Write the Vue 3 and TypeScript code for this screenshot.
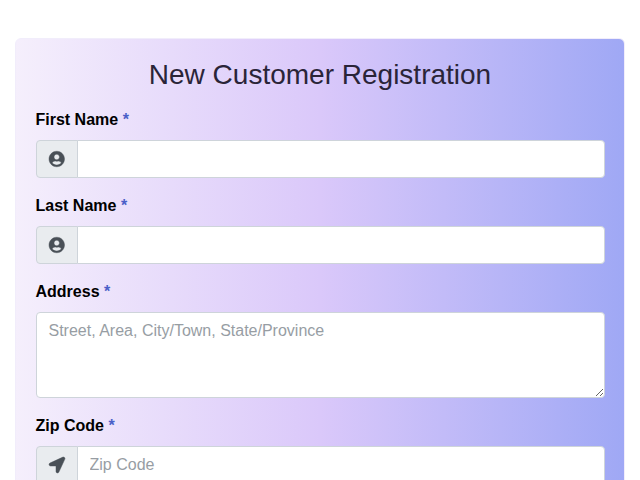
<script setup lang="ts">
const userPath =
  'M248 8C111 8 0 119 0 256s111 248 248 248 248-111 248-248S385 8 248 8zm0 96c48.6 0 88 39.4 88 88s-39.4 88-88 88-88-39.4-88-88 39.4-88 88-88zm0 344c-58.7 0-111.3-26.6-146.5-68.2 18.8-35.4 55.6-59.8 98.5-59.8 2.4 0 4.8.4 7.1 1.1 13 4.2 26.6 6.9 40.9 6.9 14.3 0 28-2.7 40.9-6.9 2.3-.7 4.7-1.1 7.1-1.1 42.9 0 79.7 24.4 98.5 59.8C359.3 421.4 306.7 448 248 448z'
const arrowPath =
  'M444.52 3.52L28.74 195.42c-47.97 22.39-31.98 92.75 19.19 92.75h175.91v175.91c0 51.17 70.36 67.17 92.75 19.19l191.9-415.78c15.99-38.39-25.59-79.97-63.97-63.97z'
</script>

<template>
  <div class="page">
    <form class="card" @submit.prevent>
      <h2 class="title">New Customer Registration</h2>

      <div class="field">
        <label class="label" for="first">First Name <span class="req">*</span></label>
        <div class="group">
          <span class="addon">
            <svg class="icon icon-user" viewBox="0 0 496 512"><path :d="userPath" /></svg>
          </span>
          <input id="first" class="control" type="text" />
        </div>
      </div>

      <div class="field">
        <label class="label" for="last">Last Name <span class="req">*</span></label>
        <div class="group">
          <span class="addon">
            <svg class="icon icon-user" viewBox="0 0 496 512"><path :d="userPath" /></svg>
          </span>
          <input id="last" class="control" type="text" />
        </div>
      </div>

      <div class="field">
        <label class="label" for="address">Address <span class="req">*</span></label>
        <textarea
          id="address"
          class="area"
          rows="3"
          placeholder="Street, Area, City/Town, State/Province"
        ></textarea>
      </div>

      <div class="field">
        <label class="label" for="zip">Zip Code <span class="req">*</span></label>
        <div class="group">
          <span class="addon">
            <svg class="icon" viewBox="0 0 512 512"><path :d="arrowPath" /></svg>
          </span>
          <input id="zip" class="control" type="text" placeholder="Zip Code" />
        </div>
      </div>
    </form>
  </div>
</template>

<style>
html,
body {
  overflow: hidden;
}
</style>

<style scoped>
.page {
  padding: 38px 15px 0;
  font-family: "Liberation Sans", Arial, sans-serif;
  font-size: 16px;
  line-height: 1.5;
  color: #212529;
}

.card {
  padding: 18.5px 19.5px 20px;
  border: 1px solid #f1edfb;
  border-radius: 6px;
  background: linear-gradient(to right, #f5effc, #dac8fa 50%, #9fa8f5) border-box;
  box-sizing: border-box;
}

.title {
  margin: 0 0 16.5px;
  font-size: 28px;
  font-weight: 400;
  line-height: 1.2;
  text-align: center;
  color: #2a2438;
}

.field {
  margin-bottom: 16px;
}

.label {
  display: block;
  margin-bottom: 8px;
  font-weight: 700;
  color: #000;
}

.req {
  color: #4a60c8;
}

.group {
  display: flex;
  height: 38px;
}

.addon {
  display: flex;
  align-items: center;
  padding: 0 12px;
  background: #e9ecef;
  border: 1px solid #ced4da;
  border-radius: 4px 0 0 4px;
}

.icon {
  width: 16px;
  height: 16px;
  overflow: visible;
  fill: #495057;
  stroke: #495057;
  stroke-width: 14;
}

.icon-user {
  width: 15.5px;
  margin-right: 0.5px;
}

.control,
.area {
  display: block;
  padding: 6px 12px;
  font: inherit;
  color: #212529;
  background: #fff;
  border: 1px solid #ced4da;
  box-sizing: border-box;
  outline: none;
}

.control {
  flex: 1;
  min-width: 0;
  margin-left: -1px;
  border-radius: 0 4px 4px 0;
}

.area {
  width: 100%;
  height: 86px;
  border-radius: 4px;
}

.control::placeholder,
.area::placeholder {
  color: #6c757d;
  opacity: 0.7;
}
</style>
